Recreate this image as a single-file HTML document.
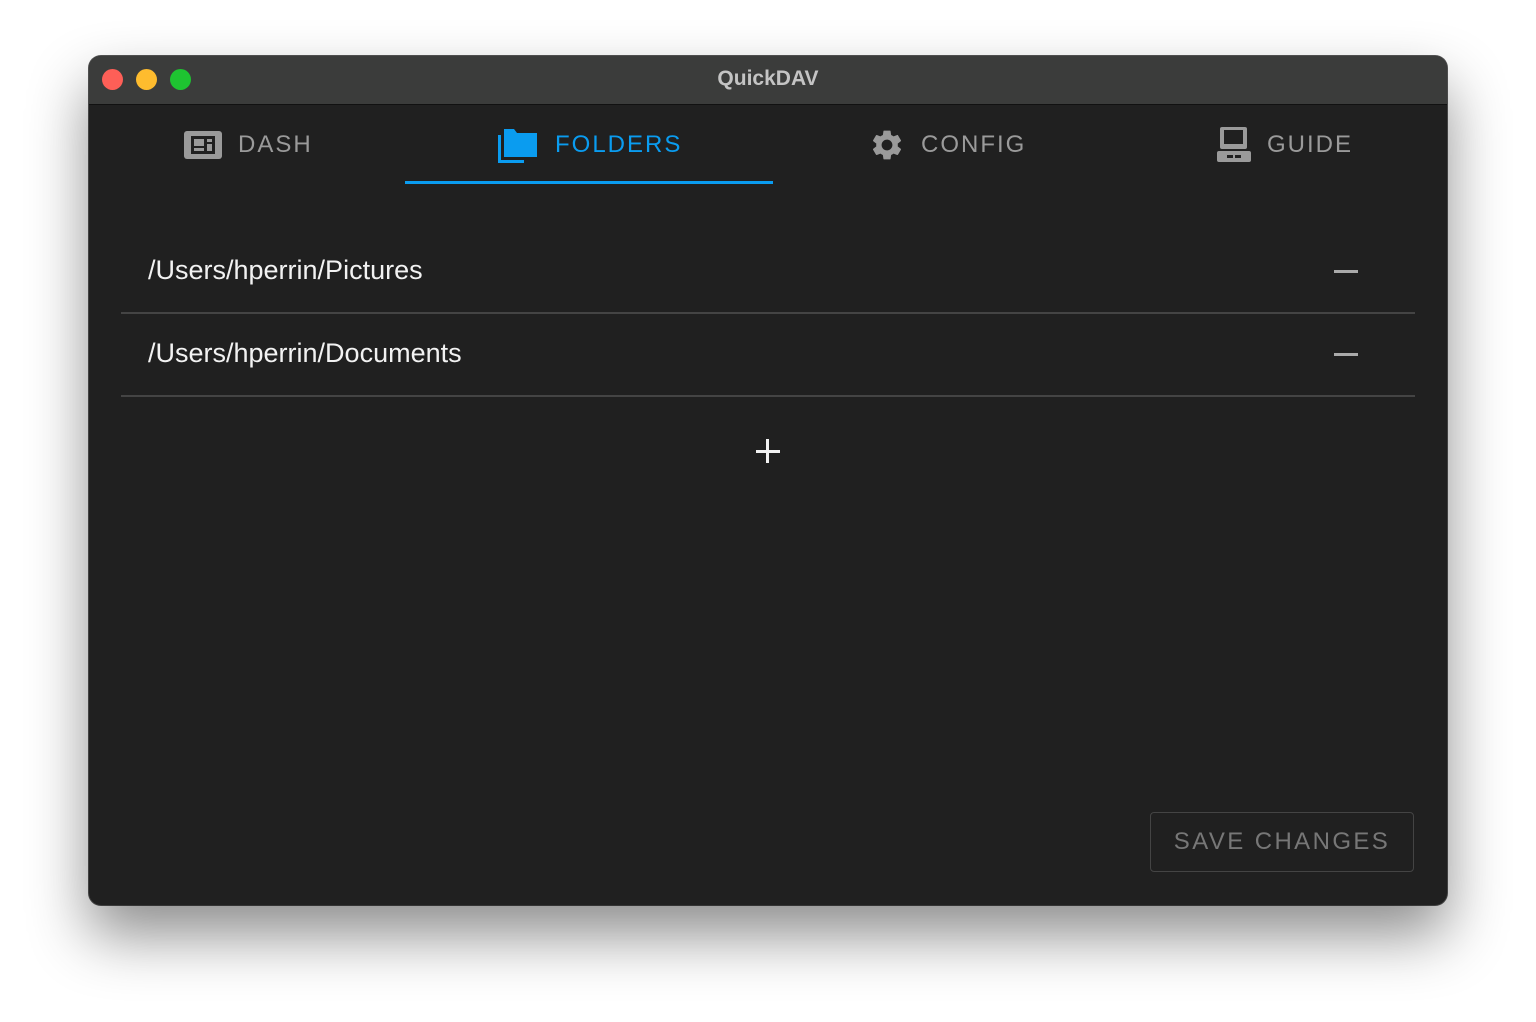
<!DOCTYPE html>
<html><head><meta charset="utf-8"><style>
html,body{margin:0;padding:0;width:1536px;height:1022px;background:#fff;overflow:hidden;font-family:"Liberation Sans",sans-serif}
.win{position:absolute;left:89px;top:56px;width:1358px;height:849px;border-radius:12px;background:#202020;box-shadow:0 30px 60px rgba(0,0,0,.45),0 0 0 1px #555;overflow:hidden}
.tb{position:absolute;left:0;top:0;width:100%;height:48px;background:#3b3c3b;border-bottom:1px solid #111}
.dot{position:absolute;top:13px;width:21px;height:21px;border-radius:50%}
.title{position:absolute;left:0;width:100%;top:11px;text-align:center;color:#c4c4c4;font-weight:bold;font-size:21px}
.tab{position:absolute;top:70px;height:38px;display:flex;align-items:center;font-size:24px;letter-spacing:2px;color:#9a9a9a}
.tab svg{margin-right:16px}
.ul{position:absolute;left:316px;top:125px;width:368px;height:3px;background:#0a9cf0}
.row{position:absolute;left:59px;color:#f2f2f2;font-size:27px}
.hr{position:absolute;left:32px;width:1294px;height:2px;background:#444}
.minus{position:absolute;left:1245px;width:24px;height:3px;background:#aaa}
.btn{position:absolute;left:1061px;top:756px;width:262px;height:58px;border:1.5px solid #444;border-radius:4px;color:#777;font-size:24px;letter-spacing:2.4px;text-align:center;line-height:58px}
</style></head><body>
<div class="win">
 <div class="tb">
  <div class="dot" style="left:13px;background:#fe5f57"></div>
  <div class="dot" style="left:47px;background:#febc2e"></div>
  <div class="dot" style="left:81px;background:#1ec431"></div>
  <div class="title">QuickDAV</div>
 </div>
 <div class="tab" style="left:95px">
  <svg width="38" height="28" viewBox="0 0 38 28"><rect x="0" y="0" width="38" height="28" rx="3" fill="#9a9a9a"/><rect x="7" y="5" width="24" height="18" fill="#202020"/><rect x="10" y="8" width="10" height="7" fill="#9a9a9a"/><rect x="10" y="17" width="10" height="3" fill="#9a9a9a"/><rect x="23" y="8" width="5" height="3" fill="#9a9a9a"/><rect x="23" y="13" width="5" height="7" fill="#9a9a9a"/></svg>DASH</div>
 <div class="tab" style="left:408px;color:#0a9cf0">
  <svg width="42" height="36" viewBox="0 0 42 36"><path d="M1 8v28h26v-3H4V8z" fill="#0a9cf0"/><path d="M7 2h10l3 4h20v24H7z" fill="#0a9cf0"/></svg>FOLDERS</div>
 <div class="tab" style="left:780px">
  <svg width="36" height="36" viewBox="0 0 24 24"><path fill="#9a9a9a" d="M19.14 12.94c.04-.3.06-.61.06-.94 0-.32-.02-.64-.07-.94l2.03-1.58a.49.49 0 0 0 .12-.61l-1.920-3.32a.488.488 0 0 0-.59-.22l-2.39.96c-.5-.38-1.03-.7-1.62-.94l-.36-2.54a.484.484 0 0 0-.48-.41h-3.84c-.24 0-.43.17-.47.41l-.36 2.54c-.59.24-1.13.57-1.62.94l-2.39-.96c-.22-.08-.47 0-.59.22L2.740 8.87c-.12.21-.08.47.12.61l2.03 1.58c-.05.3-.09.63-.09.94s.02.64.07.94l-2.03 1.58a.49.49 0 0 0-.12.61l1.92 3.32c.12.22.37.29.59.22l2.39-.96c.5.38 1.03.7 1.62.94l.36 2.54c.05.24.24.41.48.41h3.84c.24 0 .44-.17.47-.41l.36-2.54c.59-.24 1.13-.56 1.62-.94l2.39.96c.22.08.47 0 .59-.22l1.92-3.32c.12-.22.07-.47-.12-.61l-2.01-1.58zM12 15.6c-1.98 0-3.6-1.62-3.6-3.6s1.62-3.6 3.6-3.6 3.6 1.62 3.6 3.6-1.62 3.6-3.6 3.6z"/></svg>CONFIG</div>
 <div class="tab" style="left:1128px">
  <svg width="34" height="36" viewBox="0 0 34 36"><rect x="3" y="0" width="27" height="22" rx="2" fill="#9a9a9a"/><rect x="7" y="3" width="19" height="14" fill="#202020"/><rect x="0" y="24" width="34" height="11" rx="2" fill="#9a9a9a"/><rect x="10" y="28" width="6" height="3" fill="#202020"/><rect x="18" y="28" width="6" height="3" fill="#202020"/></svg>GUIDE</div>
 <div class="ul"></div>
 <div class="row" style="top:199px">/Users/hperrin/Pictures</div>
 <div class="minus" style="top:214px"></div>
 <div class="hr" style="top:256px"></div>
 <div class="row" style="top:282px">/Users/hperrin/Documents</div>
 <div class="minus" style="top:297px"></div>
 <div class="hr" style="top:339px"></div>
 <div style="position:absolute;left:667px;top:394px;width:24px;height:3px;background:#f2f2f2"></div>
 <div style="position:absolute;left:677px;top:383px;width:3px;height:24px;background:#f2f2f2"></div>
 <div class="btn">SAVE CHANGES</div>
</div>
</body></html>
